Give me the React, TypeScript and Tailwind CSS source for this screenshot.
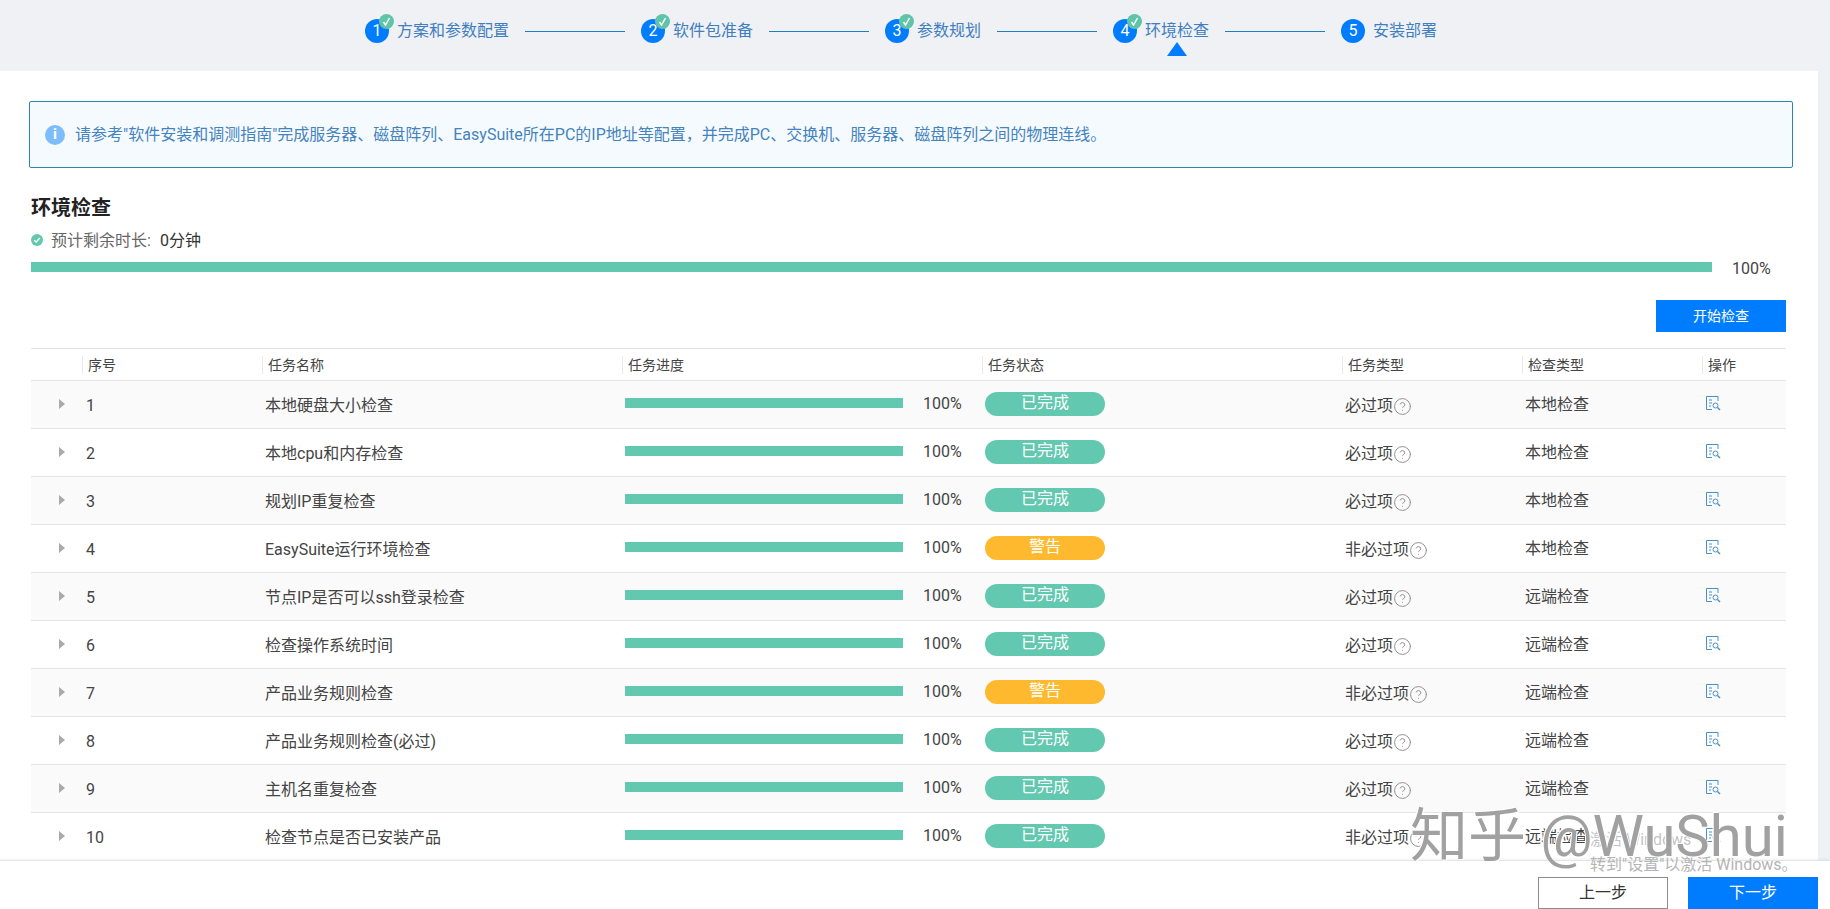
import React from "react";
import { CircleHelp } from "lucide-react";

const steps = [
  { n: 1, label: "方案和参数配置", done: true },
  { n: 2, label: "软件包准备", done: true },
  { n: 3, label: "参数规划", done: true },
  { n: 4, label: "环境检查", done: true, active: true },
  { n: 5, label: "安装部署", done: false },
];

const rows = [
  { name: "本地硬盘大小检查", warn: false, required: true, check: "本地检查" },
  { name: "本地cpu和内存检查", warn: false, required: true, check: "本地检查" },
  { name: "规划IP重复检查", warn: false, required: true, check: "本地检查" },
  { name: "EasySuite运行环境检查", warn: true, required: false, check: "本地检查" },
  { name: "节点IP是否可以ssh登录检查", warn: false, required: true, check: "远端检查" },
  { name: "检查操作系统时间", warn: false, required: true, check: "远端检查" },
  { name: "产品业务规则检查", warn: true, required: false, check: "远端检查" },
  { name: "产品业务规则检查(必过)", warn: false, required: true, check: "远端检查" },
  { name: "主机名重复检查", warn: false, required: true, check: "远端检查" },
  { name: "检查节点是否已安装产品", warn: false, required: false, check: "远端检查" },
];

const headers = ["序号", "任务名称", "任务进度", "任务状态", "任务类型", "检查类型", "操作"];

const gridCols = "grid grid-cols-[51px_180px_360px_360px_360px_180px_180px_84px] w-[1755px]";

function ReportIcon() {
  return (
    <svg width="16" height="16" viewBox="0 0 16 16" fill="none" stroke="#4a90c8" strokeWidth="1">
      <path d="M13 6V1.5H1.5v13H7" />
      <path d="M4 5h3M4 8h3M4 11h2" />
      <circle cx="10.5" cy="10.5" r="2.5" />
      <path d="M12.5 12.5 15 15" strokeWidth="1.4" />
    </svg>
  );
}

function Stepper() {
  return (
    <div className="h-[71px] shrink-0 flex items-start pl-[365px] pt-[19px]">
      {steps.map((s, i) => (
        <div key={s.n} className="flex items-center">
          <div className="relative w-6 h-6 rounded-full bg-[#007dff] text-white text-[16px] leading-6 text-center">
            {s.n}
            {s.done && (
              <span className="absolute right-[-5px] top-[-5px] w-[15px] h-[15px] rounded-full bg-[#5fc4a8] flex items-center justify-center">
                <svg width="9" height="9" viewBox="0 0 9 9" fill="none" stroke="#fff" strokeWidth="1.5">
                  <path d="M1.5 5 3.5 8 7.5 1" />
                </svg>
              </span>
            )}
          </div>
          <div className="relative ml-2 text-[16px] leading-6 text-[#3f7fc0]">
            {s.label}
            {s.active && (
              <span className="absolute left-[22px] top-[23px] w-0 h-0 border-l-[10px] border-r-[10px] border-b-[14px] border-l-transparent border-r-transparent border-b-[#007dff]" />
            )}
          </div>
          {i < steps.length - 1 && <div className="w-[100px] h-px bg-[#1f7fc0] mx-4" />}
        </div>
      ))}
    </div>
  );
}

function TaskTable() {
  return (
    <div className="mt-4 ml-[2px] w-[1755px] border-t border-[#e4e4e4]">
      <div className={`${gridCols} h-8 items-center border-b border-[#e4e4e4] text-[14px] text-[#444]`}>
        <div />
        {headers.map((h) => (
          <div key={h} className="h-[18px] border-l border-[#e8e8e8] pl-[5px] leading-[18px]">
            {h}
          </div>
        ))}
      </div>
      {rows.map((r, i) => (
        <div
          key={r.name}
          className={`${gridCols} h-12 items-center border-b border-[#e4e4e4] text-[16px] text-[#444] ${i % 2 === 0 ? "bg-[#fafafa]" : "bg-white"}`}
        >
          <div className="pl-7 pb-[1px]">
            <span className="block w-0 h-0 border-y-[5px] border-l-[6px] border-y-transparent border-l-[#aaaaaa]" />
          </div>
          <div className="pl-1 pt-[2px]">{i + 1}</div>
          <div className="pl-[3px] pt-[2px]">{r.name}</div>
          <div className="pl-[3px] flex items-center">
            <div className="w-[278px] h-[10px] mb-[3px] bg-[#62c9b0]" />
            <span className="ml-5 mb-[1px]">100%</span>
          </div>
          <div className="pl-[3px] pb-[1px]">
            <div
              className={`w-[120px] h-6 rounded-full text-white text-center leading-[22px] ${r.warn ? "bg-[#ffb92e]" : "bg-[#62c9b0]"}`}
            >
              {r.warn ? "警告" : "已完成"}
            </div>
          </div>
          <div className="pl-[3px] pt-[3px] flex items-center">
            {r.required ? "必过项" : "非必过项"}
            <CircleHelp size={19} strokeWidth={1.2} className="text-[#8c8c8c]" />
          </div>
          <div className="pl-[3px] pt-[1px]">{r.check}</div>
          <div className="pl-[3px] pb-[4px]">
            <ReportIcon />
          </div>
        </div>
      ))}
    </div>
  );
}

export default function App() {
  return (
    <div className="relative w-[1830px] h-[909px] overflow-hidden flex flex-col bg-[#f0f1f5] font-['Roboto','Noto_Sans_CJK_SC',sans-serif]">
      <Stepper />

      <div className="h-[789px] w-[1818px] bg-white pl-[29px] pt-[30px] overflow-hidden">
        <div className="w-[1764px] h-[67px] flex items-center border border-[#2f86ab] rounded-[2px] bg-[#f5faff] pl-[15px]">
          <span className="w-5 h-5 rounded-full bg-[#7dbdfa] flex items-center justify-center text-white text-[15px] font-bold leading-none">
            i
          </span>
          <span className="ml-[10px] mt-[1px] text-[16px] text-[#4583bd]">
            请参考"软件安装和调测指南"完成服务器、磁盘阵列、EasySuite所在PC的IP地址等配置，并完成PC、交换机、服务器、磁盘阵列之间的物理连线。
          </span>
        </div>

        <div className="ml-[2px] mt-[26px] text-[20px] leading-7 font-bold text-[#222]">环境检查</div>
        <div className="ml-[2px] mt-[7px] h-6 flex items-center text-[16px]">
          <span className="w-3 h-3 rounded-full bg-[#62c9b0] flex items-center justify-center mb-[3px]">
            <svg width="8" height="8" viewBox="0 0 8 8" fill="none" stroke="#fff" strokeWidth="1.4">
              <path d="M1.2 4.2 3.2 6 6.8 2" />
            </svg>
          </span>
          <span className="ml-2 text-[#666]">预计剩余时长:</span>
          <span className="ml-[9px] text-[#333]">0分钟</span>
        </div>

        <div className="ml-[2px] mt-[9px] flex items-center h-[10px]">
          <div className="w-[1681px] h-[10px] bg-[#62c9b0]" />
          <span className="ml-5 mt-[3px] text-[16px] text-[#444]">100%</span>
        </div>

        <div className="w-[1757px] flex justify-end mt-7">
          <button className="w-[130px] h-8 bg-[#007dff] text-white text-[14px]">开始检查</button>
        </div>

        <TaskTable />
      </div>

      <div className="relative h-[49px] w-full shrink-0 bg-white border-t border-[#e4e4e4] shadow-[0_-1px_3px_rgba(0,0,0,0.06)] flex items-end justify-end gap-5 pr-3">
        <button className="w-[130px] h-8 bg-white border border-[#8c8c8c] text-[#333] text-[16px]">上一步</button>
        <button className="w-[130px] h-8 bg-[#007dff] text-white text-[16px]">下一步</button>
      </div>

      <div className="absolute left-[1590px] top-[830px] text-[16px] leading-5 text-[#9a9a9a]/60">激活 Windows</div>
      <div className="absolute left-[1590px] top-[855px] text-[16px] leading-5 whitespace-nowrap text-[#b5b5b5]">
        转到"设置"以激活 Windows。
      </div>
      <div className="absolute left-[1410px] top-[800px] text-[58px] leading-[72px] whitespace-nowrap text-[#8a8a8a]/80 [text-shadow:0_0_2px_#fff,1px_1px_0_#fff,-1px_-1px_0_#fff]">
        知乎 @WuShui
      </div>
    </div>
  );
}
